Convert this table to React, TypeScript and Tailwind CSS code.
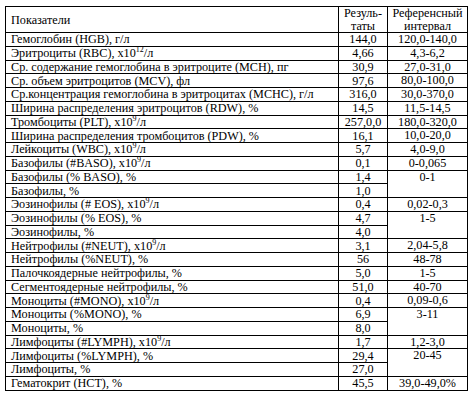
import React from "react";

type Row = { name: React.ReactNode; val: string; ref?: string; span?: number; skip?: boolean };

const Sup = ({ children }: { children: React.ReactNode }) => (
  <span className="relative -top-[5px] text-[8px] leading-none">{children}</span>
);

const sup9 = (
  <>
    x10<Sup>9</Sup>/л
  </>
);

const rows: Row[] = [
  { name: "Гемоглобин (HGB), г/л", val: "144,0", ref: "120,0-140,0" },
  {
    name: (
      <>
        Эритроциты (RBC), x10<Sup>12</Sup>/л
      </>
    ),
    val: "4,66",
    ref: "4,3-6,2",
  },
  { name: "Ср. содержание гемоглобина в эритроците (MCH), пг", val: "30,9", ref: "27,0-31,0" },
  { name: "Ср. объем эритроцитов (MCV), фл", val: "97,6", ref: "80,0-100,0" },
  { name: "Ср.концентрация гемоглобина в эритроцитах (MCHC), г/л", val: "316,0", ref: "30,0-370,0" },
  { name: "Ширина распределения эритроцитов (RDW), %", val: "14,5", ref: "11,5-14,5" },
  { name: <>Тромбоциты (PLT), {sup9}</>, val: "257,0,0", ref: "180,0-320,0" },
  { name: "Ширина распределения тромбоцитов (PDW), %", val: "16,1", ref: "10,0-20,0" },
  { name: <>Лейкоциты (WBC), {sup9}</>, val: "5,7", ref: "4,0-9,0" },
  { name: <>Базофилы (#BASO), {sup9}</>, val: "0,1", ref: "0-0,065" },
  { name: "Базофилы (% BASO), %", val: "1,4", ref: "0-1", span: 2 },
  { name: "Базофилы,  %", val: "1,0", skip: true },
  { name: <>Эозинофилы (# EOS), {sup9}</>, val: "0,4", ref: "0,02-0,3" },
  { name: "Эозинофилы (% EOS), %", val: "4,7", ref: "1-5", span: 2 },
  { name: "Эозинофилы, %", val: "4,0", skip: true },
  { name: <>Нейтрофилы (#NEUT), {sup9}</>, val: "3,1", ref: "2,04-5,8" },
  { name: "Нейтрофилы (%NEUT), %", val: "56", ref: "48-78" },
  { name: "Палочкоядерные нейтрофилы, %", val: "5,0", ref: "1-5" },
  { name: "Сегментоядерные нейтрофилы, %", val: "51,0", ref: "40-70" },
  { name: <>Моноциты (#MONO), {sup9}</>, val: "0,4", ref: "0,09-0,6" },
  { name: "Моноциты (%MONO), %", val: "6,9", ref: "3-11", span: 2 },
  { name: "Моноциты, %", val: "8,0", skip: true },
  { name: <>Лимфоциты (#LYMPH), {sup9}</>, val: "1,7", ref: "1,2-3,0" },
  { name: "Лимфоциты (%LYMPH), %", val: "29,4", ref: "20-45", span: 2 },
  { name: "Лимфоциты, %", val: "27,0", skip: true },
  { name: "Гематокрит (HCT), %", val: "45,5", ref: "39,0-49,0%" },
];

export default function App() {
  return (
    <div
      className="w-[474px] h-[402px] bg-white text-black pt-[6px] pl-[5px]"
      style={{ fontFamily: '"Liberation Serif", "Times New Roman", serif' }}
    >
      <table className="border-collapse table-fixed w-[462px] text-[12.2px] leading-[12px]">
        <colgroup>
          <col className="w-[333px]" />
          <col className="w-[49px]" />
          <col className="w-[80px]" />
        </colgroup>
        <thead>
          <tr className="h-[25px]">
            <th className="border border-black font-normal text-left p-0 pl-[5px] align-middle">Показатели</th>
            <th className="border border-black font-normal text-center p-0 align-middle leading-[12.5px]">
              <div>Резуль-</div>
              <div>таты</div>
            </th>
            <th className="border border-black font-normal text-center p-0 align-middle leading-[12.5px]">
              <div>Референсный</div>
              <div>интервал</div>
            </th>
          </tr>
        </thead>
        <tbody>
          {rows.map((r, i) => (
            <tr key={i} className="h-[13.75px]">
              <td className="border border-black p-0 pl-[5px] whitespace-nowrap align-middle">{r.name}</td>
              <td className="border border-black p-0 text-center align-middle">{r.val}</td>
              {!r.skip && (
                <td rowSpan={r.span ?? 1} className="border border-black p-0 text-center align-top">
                  {r.ref}
                </td>
              )}
            </tr>
          ))}
        </tbody>
      </table>
    </div>
  );
}
